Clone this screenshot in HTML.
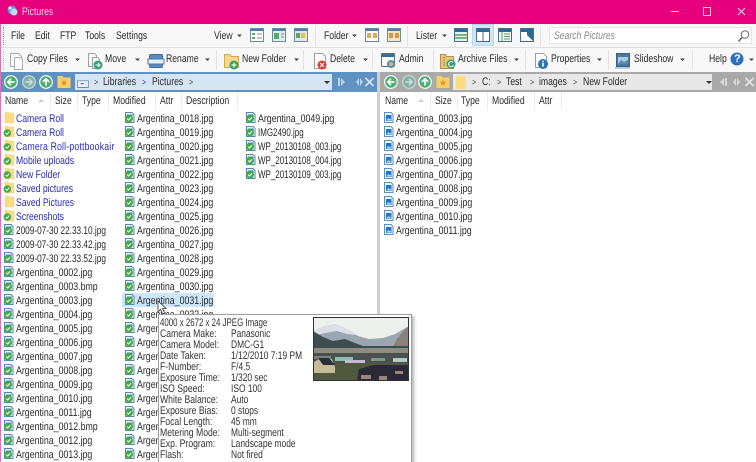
<!DOCTYPE html>
<html><head><meta charset="utf-8"><style>
html,body{margin:0;padding:0;width:756px;height:462px;overflow:hidden;background:#fff}
#w{position:absolute;left:0;top:0;width:756px;height:462px;overflow:hidden;filter:blur(.3px);font-family:"Liberation Sans",sans-serif;font-size:11px;color:#2a2a2a;text-rendering:geometricPrecision}
.a{position:absolute;white-space:nowrap}
.t{position:absolute;white-space:nowrap;line-height:14px;transform:scaleX(.785);transform-origin:0 0}
.col{--s:.80;position:absolute;width:130px;transform:scaleX(var(--s));transform-origin:0 0}
.col div{height:14px;line-height:14px;white-space:nowrap;position:relative;padding-left:calc(13px / var(--s))}
.col svg{position:absolute;left:0;top:-2px;width:13px;height:14px;transform:scaleX(calc(1 / var(--s)));transform-origin:0 0}
.blue div{color:#2a2ab0}
svg.i{position:absolute;overflow:visible}
.h{position:absolute;top:92px;height:18px;line-height:18px;white-space:nowrap;transform:scaleX(.785);transform-origin:0 0}
.tip{transform:scaleX(.785);transform-origin:0 0}
.tip div{height:11.04px;line-height:11.04px;white-space:nowrap;color:#333}
.gt{font-size:9px;color:#444}
</style></head><body><div id="w">
<svg width="0" height="0" style="position:absolute"><defs>
<symbol id="f" viewBox="0 0 13 14"><path d="M2 2h3l1 1h5v10H2z" fill="#fbdc80" stroke="#f0d070" stroke-width=".5"/></symbol>
<symbol id="fc" viewBox="0 0 13 14"><path d="M2 2h3l1 1h5v10H2z" fill="#fbdc80" stroke="#f0d070" stroke-width=".5"/><circle cx="4.300" cy="9" r="3.800" fill="#48a848"/><path d="M2.600 9l1.300 1.300 2.300-2.600" fill="none" stroke="#fff" stroke-width="1"/></symbol>
<symbol id="j" viewBox="0 0 13 14"><path d="M1.500 2.500h6.500l2 2v8h-8.500z" fill="#eef6fb" stroke="#4e88b8"/><rect x="3" y="4.500" width="5.500" height="3" fill="#3878b8"/><circle cx="5" cy="8.600" r="4" fill="#48a848"/><path d="M3.200 8.600l1.400 1.400 2.400-2.700" fill="none" stroke="#fff" stroke-width="1"/></symbol>
<symbol id="b" viewBox="0 0 13 14"><path d="M1.500 2.500h6.500l2 2v8h-8.500z" fill="#eef6fc" stroke="#5a90c0"/><rect x="3" y="5" width="5.500" height="6" fill="#2a74c0"/><path d="M3.500 10.500l1.700-2.500 1.300 1.300.8-.8.8 2z" fill="#bfe0f8"/></symbol>
<symbol id="back" viewBox="0 0 14 14"><circle cx="7" cy="7" r="6.300" fill="#4cb070" stroke="#fff" stroke-width="1.200"/><path d="M10.500 7H4M7 3.800L3.800 7 7 10.200" fill="none" stroke="#fff" stroke-width="1.700"/></symbol>
<symbol id="fwd" viewBox="0 0 14 14"><circle cx="7" cy="7" r="6.300" fill="#80b0a8" stroke="#c8dcd8" stroke-width="1.200"/><path d="M3.500 7H10M7 3.800L10.200 7 7 10.200" fill="none" stroke="#c8dcd8" stroke-width="1.700"/></symbol>
<symbol id="up" viewBox="0 0 14 14"><circle cx="7" cy="7" r="6.300" fill="#4cb070" stroke="#fff" stroke-width="1.200"/><path d="M7 10.500V4M3.800 7L7 3.800 10.200 7" fill="none" stroke="#fff" stroke-width="1.700"/></symbol>
<symbol id="fav" viewBox="0 0 14 14"><path d="M.5 2.500V1h5l1 1.500h7V13H.5z" fill="#f9cf6a"/><path d="M7 4.500l1 2.200 2.300.2-1.700 1.600.5 2.300L7 9.600 4.900 10.800l.5-2.300L3.700 6.900 6 6.700z" fill="#dc9a30"/></symbol>
<symbol id="win" viewBox="0 0 14 14"><rect x=".5" y="5.500" width="13" height="8" fill="#e8eef4" stroke="#7a98b0"/><path d="M2 13.500h10" stroke="#4e88b8"/><path d="M4 9h4" stroke="#446"/></symbol>
</defs></svg>

<!-- title bar -->
<div class="a" style="left:0;top:0;width:756px;height:24px;background:#e6007e"></div>
<svg class="i" style="left:6px;top:4px" width="13" height="14"><circle cx="6" cy="6" r="4.500" fill="#5a9ce0"/><circle cx="8" cy="8" r="3.500" fill="#c8d8f0"/><circle cx="4" cy="4" r="1.500" fill="#e8f0ff"/></svg>
<div class="t" style="left:22px;top:5px;color:#fbd0e8">Pictures</div>
<svg class="i" style="left:670px;top:5px" width="80" height="14" fill="none" stroke="#f8c0e0"><path d="M1 6.500h8"/><rect x="33.500" y="2.500" width="7" height="8"/><path d="M68 3l7 7M75 3l-7 7" stroke="#f8d8ea"/></svg>
<div class="a" style="left:0;top:24px;width:1px;height:438px;background:#e070b8"></div>

<!-- toolbars -->
<div class="a" style="left:1px;top:24px;width:755px;height:24px;background:#f8f8f8;border-bottom:1px solid #e0e0e0;box-sizing:border-box"></div>
<div class="a" style="left:1px;top:48px;width:755px;height:24px;background:#f8f8f8"></div>
<div class="a" style="left:3px;top:27px;width:1px;height:18px;border-left:1px dotted #888"></div>
<div class="a" style="left:3px;top:51px;width:1px;height:18px;border-left:1px dotted #bbb"></div>
<div class="t" style="left:11px;top:28.500px">File</div>
<div class="t" style="left:35px;top:28.500px">Edit</div>
<div class="t" style="left:60px;top:28.500px">FTP</div>
<div class="t" style="left:85px;top:28.500px">Tools</div>
<div class="t" style="left:116px;top:28.500px">Settings</div>
<div class="t" style="left:214px;top:28.500px">View</div>
<div class="t" style="left:324px;top:28.500px">Folder</div>
<div class="t" style="left:416px;top:28.500px">Lister</div>
<svg class="i" style="left:0;top:24px" width="756" height="48" fill="none">
<g fill="#444"><path d="M237 10.500h5l-2.500 2.500zM352 10.500h5l-2.500 2.500zM442 10.500h5l-2.500 2.500zM75 34.500h5l-2.500 2.500zM135 34.500h5l-2.500 2.500zM205 34.500h5l-2.500 2.500zM294 34.500h5l-2.500 2.500zM363 34.500h5l-2.500 2.500zM514 34.500h5l-2.500 2.500zM597 34.500h5l-2.500 2.500zM680 34.500h5l-2.500 2.500zM749 34.500h5l-2.500 2.500z"/></g>
<g stroke="#e2e2e2"><path d="M315.500 2v20M407.500 2v20M540.500 2v20M216.500 26v20M303.500 26v20M372.500 26v20M433.500 26v20M525.500 26v20M608.500 26v20M692.500 26v20"/></g>
<!-- view icons -->
<g stroke="#6a8aa4"><rect x="250.500" y="4.500" width="13" height="13" fill="#fff"/><rect x="272.500" y="4.500" width="13" height="13" fill="#e0eef0"/><rect x="294.500" y="4.500" width="13" height="13" fill="#e0e8ec"/><rect x="365.500" y="4.500" width="13" height="13" fill="#fff"/><rect x="387.500" y="4.500" width="13" height="13" fill="#f0e4cc"/></g>
<g fill="#4e7ea8"><rect x="251" y="5" width="12" height="2"/><rect x="273" y="5" width="12" height="2"/><rect x="295" y="5" width="12" height="2"/><rect x="366" y="5" width="12" height="2"/><rect x="388" y="5" width="12" height="2"/></g>
<g fill="#5aa868"><rect x="252" y="9" width="3" height="2"/><rect x="252" y="13" width="3" height="2"/><rect x="274" y="9" width="5" height="6"/><rect x="296" y="9" width="4" height="5"/></g>
<rect x="301" y="9" width="4" height="5" fill="#e8c050"/><rect x="367" y="9" width="4" height="5" fill="#e0a860"/><rect x="373" y="9" width="4" height="5" fill="#e0a860"/><rect x="389" y="9" width="4" height="5" fill="#d89840"/><rect x="395" y="9" width="4" height="5" fill="#d89840"/>
<g stroke="#888"><path d="M257 10h5M257 14h5M281 10h3M281 13h3"/></g>
<!-- lister icons -->
<rect x="472.500" y="0.500" width="21" height="21" fill="#cfe6f8" stroke="#b8d8f0"/>
<g stroke="#4a6e8c"><rect x="454.500" y="4.500" width="13" height="13" fill="#e8f0e8"/><rect x="476.500" y="4.500" width="13" height="13" fill="#fff"/><rect x="498.500" y="4.500" width="13" height="13" fill="#f0f6f4"/><rect x="520.500" y="4.500" width="13" height="13" fill="#fff"/></g>
<g fill="#2c6a94"><rect x="455" y="5" width="12" height="3"/><rect x="477" y="5" width="12" height="3"/><rect x="499" y="5" width="12" height="3"/><rect x="521" y="5" width="12" height="3"/><path d="M527 8h6v9l-6-6z"/></g>
<path d="M455 11h12M455 14h12" stroke="#58a060" stroke-width="1.500"/><path d="M483 8v9" stroke="#4a6e8c"/><path d="M502 8v9M504 10h6M504 12.500h6M504 15h6" stroke="#58a060"/>
<!-- row 2 icons -->
<path d="M10.500 29.500h8l3 3v10h-11z" fill="#fff" stroke="#a8acb0"/><path d="M14.500 33.500h6l2 2v10h-8z" fill="#fff" stroke="#a8acb0"/>
<path d="M88.500 29.500h6l2 2v11h-8z" fill="#fff" stroke="#9aa0a6"/><path d="M92.500 33.500h5l2 2v9h-7z" fill="#fff" stroke="#9aa0a6"/><circle cx="98" cy="41" r="4.500" fill="#38a080"/><path d="M95.500 41h5M98 39l2 2-2 2" stroke="#fff"/>
<rect x="149.500" y="30.500" width="13" height="13" rx="1.500" fill="#5a8cc0" stroke="#3a6a9c"/><rect x="148" y="35" width="16" height="5" fill="#e8f0f8" stroke="#4a78a8"/>
<path d="M224.500 30.500h5l2 2h7v11h-14z" fill="#f8d88a" stroke="#d8a850"/><circle cx="234" cy="41" r="4.500" fill="#38a060"/><path d="M231.500 41h5M234 38.500v5" stroke="#fff" stroke-width="1.200"/>
<path d="M314.500 29.500h8l3 3v12h-11z" fill="#fff" stroke="#9aa0a6"/><circle cx="322" cy="41" r="4.500" fill="#d8402c"/><path d="M320 39l4 4M324 39l-4 4" stroke="#fff"/>
<rect x="381.500" y="29.500" width="13" height="13" rx="1" fill="#fff" stroke="#4a7090"/><rect x="382" y="30" width="12" height="3" fill="#3a6c98"/><circle cx="391" cy="40" r="4" fill="#5a90a8"/><circle cx="391" cy="40" r="2" fill="#d0b880"/>
<path d="M440.500 30.500h5l1 2h7v12h-13z" fill="#e8c878" stroke="#b89048"/><path d="M444 33v10" stroke="#806838" stroke-dasharray="1.500 1"/><circle cx="451" cy="40" r="4.500" fill="#38a070"/><path d="M453 38.500a2.500 2.500 0 1 0 .5 2.500" stroke="#fff" fill="none"/>
<path d="M535.500 29.500h8l3 3v11h-11z" fill="#fff" stroke="#9aa0a6"/><circle cx="543" cy="40" r="5" fill="#2a74b8"/><rect x="542.200" y="39" width="1.600" height="3.600" fill="#fff"/><rect x="542.200" y="36.800" width="1.600" height="1.400" fill="#fff"/>
<rect x="616.500" y="29.500" width="13" height="13" fill="#4c7aa0" stroke="#3a6284"/><rect x="618" y="33" width="10" height="7" fill="#a8cce0"/><path d="M618 40l3-4 3 2 4-2v4z" fill="#5a8ab0"/><path d="M615 44h15" stroke="#80a0b8"/>
<circle cx="737" cy="35" r="6.500" fill="#2a70c0"/>
</svg>
<div class="t" style="left:27px;top:52px">Copy Files</div>
<div class="t" style="left:105px;top:52px">Move</div>
<div class="t" style="left:166px;top:52px">Rename</div>
<div class="t" style="left:242px;top:52px">New Folder</div>
<div class="t" style="left:330px;top:52px">Delete</div>
<div class="t" style="left:399px;top:52px">Admin</div>
<div class="t" style="left:458px;top:52px">Archive Files</div>
<div class="t" style="left:551px;top:52px">Properties</div>
<div class="t" style="left:634px;top:52px">Slideshow</div>
<div class="t" style="left:709px;top:52px">Help</div>
<div class="a" style="left:734px;top:52px;color:#fff;font-weight:bold;font-size:11px;width:6px;line-height:14px;text-align:center">?</div>
<div class="a" style="left:549px;top:27px;width:201px;height:15px;background:#fff;border:1px solid #e4e4e4"></div>
<div class="t" style="left:554px;top:28.500px;font-style:italic;color:#8a8a8a">Search Pictures</div>
<svg class="i" style="left:737px;top:29px" width="14" height="14" fill="none" stroke="#666"><circle cx="8" cy="5.500" r="3.800"/><path d="M5 8.500L1.500 12.500" stroke-width="1.600"/></svg>

<!-- pane headers -->
<div class="a" style="left:1px;top:72px;width:376px;height:20px;background:#5f92c0"></div>
<div class="a" style="left:380px;top:72px;width:376px;height:20px;background:#a9a9a9"></div>
<div class="a" style="left:377px;top:72px;width:3px;height:390px;background:#cfcfcf"></div>
<div class="a" style="left:75px;top:74px;width:257px;height:16px;background:#d6e5f4"></div>
<div class="a" style="left:453px;top:74px;width:259px;height:16px;background:#e8e8e8"></div>
<svg class="i" style="left:4px;top:75px" width="14" height="14"><use href="#back"/></svg>
<svg class="i" style="left:22px;top:75px" width="14" height="14"><use href="#fwd"/></svg>
<svg class="i" style="left:39px;top:75px" width="14" height="14"><use href="#up"/></svg>
<svg class="i" style="left:57px;top:75px" width="14" height="14"><use href="#fav"/></svg>
<svg class="i" style="left:384px;top:75px" width="14" height="14"><use href="#back"/></svg>
<svg class="i" style="left:402px;top:75px" width="14" height="14"><use href="#fwd"/></svg>
<svg class="i" style="left:418px;top:75px" width="14" height="14"><use href="#up"/></svg>
<svg class="i" style="left:436px;top:75px" width="14" height="14"><use href="#fav"/></svg>
<svg class="i" style="left:77px;top:76px" width="12" height="12"><use href="#win"/></svg>
<div class="a" style="left:456px;top:76px;width:10px;height:13px;background:#fbdc80"></div>
<div class="t gt" style="left:94px;top:75px">&gt;</div>
<div class="t" style="left:103px;top:75px">Libraries</div>
<div class="t gt" style="left:142px;top:75px">&gt;</div>
<div class="t" style="left:152px;top:75px">Pictures</div>
<div class="t gt" style="left:189px;top:75px">&gt;</div>
<div class="t gt" style="left:472px;top:75px">&gt;</div>
<div class="t" style="left:482px;top:75px">C:</div>
<div class="t gt" style="left:497px;top:75px">&gt;</div>
<div class="t" style="left:506px;top:75px">Test</div>
<div class="t gt" style="left:530px;top:75px">&gt;</div>
<div class="t" style="left:539px;top:75px">images</div>
<div class="t gt" style="left:573px;top:75px">&gt;</div>
<div class="t" style="left:583px;top:75px">New Folder</div>
<svg class="i" style="left:0;top:72px" width="756" height="20">
<path d="M324 9h6l-3 3zM706 9h6l-3 3z" fill="#333"/>
<g fill="#b8d4f0"><path d="M338 6h2v8h-2zM341 6l4 4-4 4zM356 10l3-4v8zM360 6l3 4-3 4z"/></g>
<path d="M365.500 6l8 8M373.500 6l-8 8" stroke="#d0e4f8" stroke-width="1.800"/>
<g fill="#d8d8d8"><path d="M724 6l-4 4 4 4zM725 6h2v8h-2zM733 10l3-4v8zM737 6l3 4-3 4z"/></g>
<path d="M745.500 6l8 8M753.500 6l-8 8" stroke="#e4e4e4" stroke-width="1.800"/>
</svg>

<!-- column headers -->
<div class="h" style="left:5px">Name</div><div class="h" style="left:55px">Size</div><div class="h" style="left:82px">Type</div><div class="h" style="left:113px">Modified</div><div class="h" style="left:160px">Attr</div><div class="h" style="left:186px">Description</div>
<div class="h" style="left:385px">Name</div><div class="h" style="left:435px">Size</div><div class="h" style="left:461px">Type</div><div class="h" style="left:492px">Modified</div><div class="h" style="left:539px">Attr</div>
<svg class="i" style="left:0;top:92px" width="756" height="18"><path d="M38 10h6l-3-3zM418 10h6l-3-3z" fill="#ccc"/><g stroke="#ececec"><path d="M50.500 0v18M77.500 0v18M108.500 0v18M155.500 0v18M181.500 0v18M237.500 0v18M430.500 0v18M457.500 0v18M487.500 0v18M534.500 0v18M561.500 0v18"/></g></svg>

<!-- left pane column 1 -->
<div class="col blue" style="left:3px;top:111.500px;--s:.785">
<div><svg><use href="#f"/></svg>Camera Roll</div>
<div><svg><use href="#fc"/></svg>Camera Roll</div>
<div style="letter-spacing:.27px"><svg><use href="#fc"/></svg>Camera Roll-pottbookair</div>
<div><svg><use href="#fc"/></svg>Mobile uploads</div>
<div><svg><use href="#fc"/></svg>New Folder</div>
<div><svg><use href="#fc"/></svg>Saved pictures</div>
<div><svg><use href="#f"/></svg>Saved Pictures</div>
<div><svg><use href="#fc"/></svg>Screenshots</div>
</div>
<div class="col" style="left:3px;top:223.500px;--s:.75">
<div><svg><use href="#j"/></svg>2009-07-30 22.33.10.jpg</div>
<div><svg><use href="#j"/></svg>2009-07-30 22.33.42.jpg</div>
<div><svg><use href="#j"/></svg>2009-07-30 22.33.52.jpg</div>
</div>
<div class="col" style="left:3px;top:265.500px">
<div><svg><use href="#j"/></svg>Argentina_0002.jpg</div>
<div><svg><use href="#j"/></svg>Argentina_0003.bmp</div>
<div><svg><use href="#j"/></svg>Argentina_0003.jpg</div>
<div><svg><use href="#j"/></svg>Argentina_0004.jpg</div>
<div><svg><use href="#j"/></svg>Argentina_0005.jpg</div>
<div><svg><use href="#j"/></svg>Argentina_0006.jpg</div>
<div><svg><use href="#j"/></svg>Argentina_0007.jpg</div>
<div><svg><use href="#j"/></svg>Argentina_0008.jpg</div>
<div><svg><use href="#j"/></svg>Argentina_0009.jpg</div>
<div><svg><use href="#j"/></svg>Argentina_0010.jpg</div>
<div><svg><use href="#j"/></svg>Argentina_0011.jpg</div>
<div><svg><use href="#j"/></svg>Argentina_0012.bmp</div>
<div><svg><use href="#j"/></svg>Argentina_0012.jpg</div>
<div><svg><use href="#j"/></svg>Argentina_0013.jpg</div>
</div>

<!-- selection -->
<div class="a" style="left:122px;top:293px;width:92px;height:14px;background:#cce6fb"></div>

<!-- left pane column 2 -->
<div class="col" style="left:124px;top:111.500px">
<div><svg><use href="#j"/></svg>Argentina_0018.jpg</div>
<div><svg><use href="#j"/></svg>Argentina_0019.jpg</div>
<div><svg><use href="#j"/></svg>Argentina_0020.jpg</div>
<div><svg><use href="#j"/></svg>Argentina_0021.jpg</div>
<div><svg><use href="#j"/></svg>Argentina_0022.jpg</div>
<div><svg><use href="#j"/></svg>Argentina_0023.jpg</div>
<div><svg><use href="#j"/></svg>Argentina_0024.jpg</div>
<div><svg><use href="#j"/></svg>Argentina_0025.jpg</div>
<div><svg><use href="#j"/></svg>Argentina_0026.jpg</div>
<div><svg><use href="#j"/></svg>Argentina_0027.jpg</div>
<div><svg><use href="#j"/></svg>Argentina_0028.jpg</div>
<div><svg><use href="#j"/></svg>Argentina_0029.jpg</div>
<div><svg><use href="#j"/></svg>Argentina_0030.jpg</div>
<div><svg><use href="#j"/></svg>Argentina_0031.jpg</div>
<div><svg><use href="#j"/></svg>Argentina_0032.jpg</div>
<div><svg><use href="#j"/></svg>Argentina_0033.jpg</div>
<div><svg><use href="#j"/></svg>Argentina_0034.jpg</div>
<div><svg><use href="#j"/></svg>Argentina_0035.jpg</div>
<div><svg><use href="#j"/></svg>Argentina_0036.jpg</div>
<div><svg><use href="#j"/></svg>Argentina_0037.jpg</div>
<div><svg><use href="#j"/></svg>Argentina_0038.jpg</div>
<div><svg><use href="#j"/></svg>Argentina_0039.jpg</div>
<div><svg><use href="#j"/></svg>Argentina_0040.jpg</div>
<div><svg><use href="#j"/></svg>Argentina_0041.jpg</div>
<div><svg><use href="#j"/></svg>Argentina_0042.jpg</div>
</div>

<!-- left pane column 3 -->
<div class="col" style="left:245px;top:111.500px">
<div><svg><use href="#j"/></svg>Argentina_0049.jpg</div>
</div>
<div class="col" style="left:245px;top:125.500px;--s:.725">
<div><svg><use href="#j"/></svg>IMG2490.jpg</div>
<div><svg><use href="#j"/></svg>WP_20130108_003.jpg</div>
<div><svg><use href="#j"/></svg>WP_20130108_004.jpg</div>
<div><svg><use href="#j"/></svg>WP_20130109_003.jpg</div>
</div>

<!-- right pane -->
<div class="col" style="left:383px;top:111.500px">
<div><svg><use href="#b"/></svg>Argentina_0003.jpg</div>
<div><svg><use href="#b"/></svg>Argentina_0004.jpg</div>
<div><svg><use href="#b"/></svg>Argentina_0005.jpg</div>
<div><svg><use href="#b"/></svg>Argentina_0006.jpg</div>
<div><svg><use href="#b"/></svg>Argentina_0007.jpg</div>
<div><svg><use href="#b"/></svg>Argentina_0008.jpg</div>
<div><svg><use href="#b"/></svg>Argentina_0009.jpg</div>
<div><svg><use href="#b"/></svg>Argentina_0010.jpg</div>
<div><svg><use href="#b"/></svg>Argentina_0011.jpg</div>
</div>

<!-- tooltip -->
<div class="a" style="left:158px;top:314px;width:254px;height:148px;background:#fff;border:1px solid #a0a0a0;border-bottom:0;box-sizing:border-box;box-shadow:2px 2px 3px rgba(0,0,0,.3)"></div>
<div class="a tip" style="left:160px;top:318px;transform:scaleX(.716)">
<div>4000 x 2672 x 24 JPEG Image</div>
</div>
<div class="a tip" style="left:160px;top:329px">
<div>Camera Make:</div>
<div>Camera Model:</div>
<div>Date Taken:</div>
<div>F-Number:</div>
<div>Exposure Time:</div>
<div>ISO Speed:</div>
<div>White Balance:</div>
<div>Exposure Bias:</div>
<div>Focal Length:</div>
<div>Metering Mode:</div>
<div>Exp. Program:</div>
<div>Flash:</div>
</div>
<div class="a tip" style="left:231px;top:329px;transform:scaleX(.765)">
<div>Panasonic</div>
<div>DMC-G1</div>
<div>1/12/2010 7:19 PM</div>
<div>F/4.5</div>
<div>1/320 sec</div>
<div>ISO 100</div>
<div>Auto</div>
<div>0 stops</div>
<div>45 mm</div>
<div>Multi-segment</div>
<div>Landscape mode</div>
<div>Not fired</div>
</div>
<svg class="i" style="left:313px;top:317px" width="96" height="64" viewBox="0 0 96 64">
<rect width="96" height="64" fill="#eef0ee"/>
<path d="M0 14L12 9 22 7 32 11 45 19 56 22 70 21 82 17 96 9V34H0z" fill="#9aa6b0"/>
<path d="M0 14L12 9 22 7 32 11 43 18 34 17 24 14 12 16 0 19z" fill="#dcdfe6"/>
<path d="M84 22L92 12 96 9V30H80z" fill="#8a8278"/>
<path d="M0 14L10 20 20 24 32 22 42 26 50 29H96V33H0z" fill="#3e4e50"/>
<rect y="31" width="96" height="5" fill="#8c8c80"/>
<rect y="36" width="96" height="28" fill="#50583e"/>
<rect y="36" width="96" height="10" fill="#4a5250"/>
<path d="M22 40h18v4H22z" fill="#8fbcae"/><path d="M32 43h20v3H32z" fill="#c4b8d4"/><path d="M58 41h14v3H58z" fill="#7a9a8c"/><path d="M80 41h14v4H80z" fill="#b0ccc4"/><path d="M0 39h18v3H0z" fill="#7a8278"/>
<path d="M1 45L6 42H19L22 50V56H1z" fill="#c8bc98"/><path d="M5 41H16L22 48H10z" fill="#24303c"/>
<path d="M46 52L60 48H96V64H44z" fill="#2a2a36"/><path d="M48 58h10v4H48zM66 59h8v4h-8zM82 54h8v3h-8z" fill="#988878"/>
</svg>
<div class="a" style="left:313px;top:317px;width:96px;height:64px;border:1px solid #333;box-sizing:border-box"></div>

<!-- cursor -->
<svg class="i" style="left:157px;top:300px" width="12" height="16"><path d="M1 1v11l2.500-2.500L5.500 14l2-1-2-4.500H9z" fill="#fff" stroke="#333" stroke-width=".8"/></svg>
</div></body></html>
